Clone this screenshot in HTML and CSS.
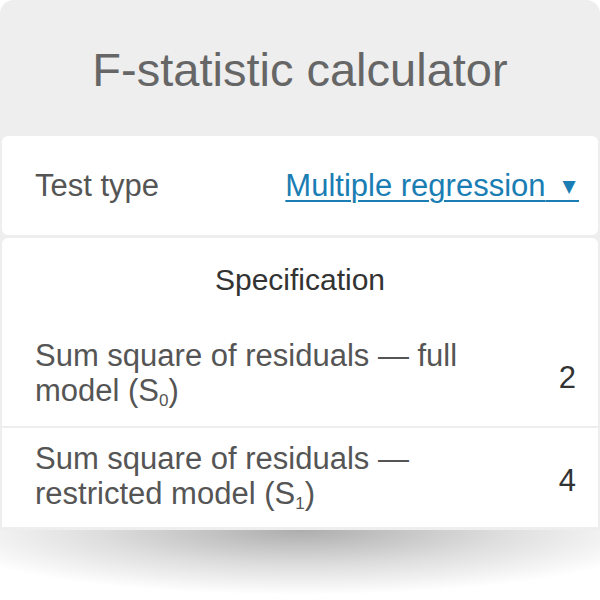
FILE: index.html
```html
<!DOCTYPE html>
<html>
  <head>
    <meta charset="utf-8" />
    <title>F-statistic calculator</title>
    <meta name="viewport" content="width=device-width, initial-scale=1.0" />
    <link rel="stylesheet" href="styles.css">
  </head>
  <body>
    <div class="calculator">
      <h1 class="heading">F-statistic calculator</h1>
      <div class="card">
        <div class="row selectRow">
          <span class="label">Test type</span>
          <a class="selectLink" href="#">Multiple regression<span class="arrow">&emsp;&#9660;&thinsp;</span></a>
        </div>
      </div>
      <div class="card">
        <div class="groupTitle">Specification</div>
        <div class="row valueRow">
          <span class="label">Sum square of residuals — full model (S<sub>0</sub>)</span>
          <span class="value">2</span>
        </div>
        <div class="row valueRow lastRow">
          <span class="label">Sum square of residuals — restricted model (S<sub>1</sub>)</span>
          <span class="value">4</span>
        </div>
      </div>
    </div>
    <div class="shadow"></div>
  </body>
</html>
```

FILE: styles.css
```css
body {
  margin: 0;
  background: #ffffff;
  font-family: "Liberation Sans", Arial, Helvetica, sans-serif;
}
.calculator {
  width: 600px;
  box-sizing: border-box;
  background: #eeeeee;
  border-radius: 14px 14px 0 0;
  padding: 0 2px 3px;
}
.shadow {
  width: 600px;
  height: 65px;
  background: radial-gradient(ellipse 62% 100% at 50% 0%, rgba(0, 0, 0, 0.32), rgba(0, 0, 0, 0.13) 55%, rgba(0, 0, 0, 0) 100%);
}
.heading {
  margin: 0;
  height: 136px;
  line-height: 140px;
  text-align: center;
  font-weight: normal;
  font-size: 47px;
  color: #666666;
}
.card {
  background: #ffffff;
  border-radius: 6px;
  margin-bottom: 3px;
}
.card:last-child {
  margin-bottom: 0;
  border-radius: 6px 6px 0 0;
}
.row {
  display: flex;
  align-items: center;
  justify-content: space-between;
  box-sizing: border-box;
  padding: 0 19px 0 33px;
}
.selectRow {
  height: 99px;
}
.label {
  font-size: 31px;
  color: #555555;
  line-height: 35px;
}
.selectLink {
  font-size: 31px;
  line-height: 35px;
  color: #1a7db3;
  text-decoration: underline;
  text-decoration-thickness: 2px;
  text-underline-offset: 4px;
}
.arrow {
  font-family: "DejaVu Sans", sans-serif;
  font-size: 17px;
  vertical-align: 4px;
}
.groupTitle {
  height: 84px;
  line-height: 84px;
  text-align: center;
  font-size: 30px;
  color: #333333;
}
.valueRow {
  height: 104px;
  padding-top: 7px;
}
.lastRow {
  height: 101px;
  border-top: 2px solid #eeeeee;
}
.valueRow .label {
  max-width: 440px;
}
.value {
  font-size: 31px;
  color: #333333;
  padding-right: 3px;
}
sub {
  font-size: 55%;
  vertical-align: -5px;
}
```
